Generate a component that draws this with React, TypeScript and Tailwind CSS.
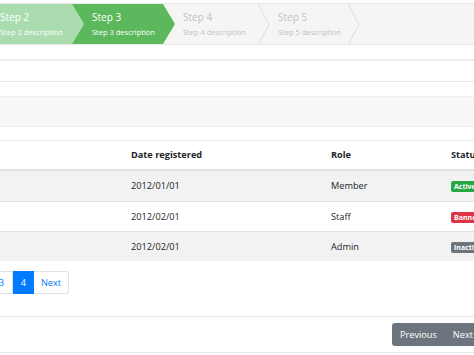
type Step = {
  title: string;
  desc: string;
  w: number;
  state: "done" | "active" | "todo";
};

const steps: Step[] = [
  { title: "Step 2", desc: "Step 2 description", w: 92, state: "done" },
  { title: "Step 3", desc: "Step 3 description", w: 91, state: "active" },
  { title: "Step 4", desc: "Step 4 description", w: 95, state: "todo" },
  { title: "Step 5", desc: "Step 5 description", w: 90, state: "todo" },
];

const rows = [
  { date: "2012/01/01", role: "Member", status: "Active", badge: "bg-[#28a745]" },
  { date: "2012/02/01", role: "Staff", status: "Banned", badge: "bg-[#dc3545]" },
  { date: "2012/02/01", role: "Admin", status: "Inactive", badge: "bg-[#6c757d]" },
];

function StepItem({ step, first }: { step: Step; first: boolean }) {
  const bg =
    step.state === "done"
      ? "bg-[#aadcaf] text-white"
      : step.state === "active"
      ? "bg-[#5cb85c] text-white"
      : "text-[#c2c2c2]";
  const clip =
    step.state === "todo"
      ? ""
      : step.w === 92
      ? "[clip-path:polygon(0_0,92px_0,104px_50%,92px_100%,0_100%,12px_50%)]"
      : "[clip-path:polygon(0_0,91px_0,103px_50%,91px_100%,0_100%,12px_50%)]";
  return (
    <div
      className={`relative h-full shrink-0 flex flex-col justify-center pl-[20px] ${bg} ${clip} ${
        first ? "-ml-[20px]" : "-ml-[12px]"
      }`}
      style={{ width: step.w + 12 }}
    >
      <div className="text-[10px] leading-[13px]">{step.title}</div>
      <div className="text-[7.5px] leading-[11px] mt-[3px]">{step.desc}</div>
      {step.state === "todo" && (
        <svg
          className="absolute top-0"
          style={{ left: step.w }}
          width="12"
          height="41"
          viewBox="0 0 12 41"
        >
          <polyline points="0,0 11,20.5 0,41" fill="none" stroke="#dcdcdc" strokeWidth="1" />
        </svg>
      )}
    </div>
  );
}

export default function App() {
  return (
    <div className="w-[474px] h-[355px] overflow-hidden bg-white text-[#212529] font-['Open_Sans',sans-serif]">
      <div className="pt-[3px]">
        <div className="h-[42px] flex bg-[#f5f5f5] border-y border-[#e6e6e6] overflow-hidden">
          {steps.map((s, i) => (
            <StepItem key={s.title} step={s} first={i === 0} />
          ))}
        </div>
      </div>

      <div className="mt-[14px] border-t-2 border-[#ececec] h-[22px]" />
      <div className="border-t border-[#e8e8e8] h-[15px]" />
      <div className="h-[31px] bg-[#f7f7f7] border-t border-[#efefef] border-b border-[#dddddd]" />
      <div className="h-[13px]" />

      <div className="border-t border-[#e9ecef] text-[9.2px]">
        <div className="grid grid-cols-[123px_200px_120px_1fr] h-[30px] items-center font-bold border-b-2 border-[#dee2e6]">
          <div />
          <div className="pl-[8px]">Date registered</div>
          <div className="pl-[8px]">Role</div>
          <div className="pl-[8px] whitespace-nowrap">Status</div>
        </div>
        {rows.map((r, i) => (
          <div
            key={i}
            className={`grid grid-cols-[123px_200px_120px_1fr] h-[30px] items-center ${
              i > 0 ? "border-t border-[#dee2e6]" : ""
            } ${i % 2 === 0 ? "bg-[#f2f2f2]" : "bg-white"}`}
          >
            <div />
            <div className="pl-[8px]">{r.date}</div>
            <div className="pl-[8px]">{r.role}</div>
            <div className="pl-[8px] whitespace-nowrap">
              <span
                className={`${r.badge} text-white font-bold text-[7px] leading-[11px] inline-block px-[3px] rounded-[2px]`}
              >
                {r.status}
              </span>
            </div>
          </div>
        ))}
      </div>

      <div className="mt-[10px] flex text-[9.2px] h-[23px]">
        <div className="-ml-[10px] w-[23px] border border-[#dee2e6] text-[#007bff] flex items-center justify-center">
          3
        </div>
        <div className="w-[21px] bg-[#007bff] border border-[#007bff] text-white flex items-center justify-center">
          4
        </div>
        <div className="w-[35px] border border-l-0 border-[#dee2e6] rounded-r-[3px] text-[#007bff] flex items-center justify-center">
          Next
        </div>
      </div>

      <div className="mt-[22px] border-t border-[#e6e6e6] h-[36px] flex justify-end items-center">
        <div className="flex h-[23px] bg-[#6c757d] text-white text-[9.2px] rounded-l-[3px] -mr-[7px]">
          <div className="px-[8px] flex items-center">Previous</div>
          <div className="px-[8px] flex items-center">Next</div>
        </div>
      </div>
      <div className="border-t border-[#e6e6e6]" />
    </div>
  );
}
